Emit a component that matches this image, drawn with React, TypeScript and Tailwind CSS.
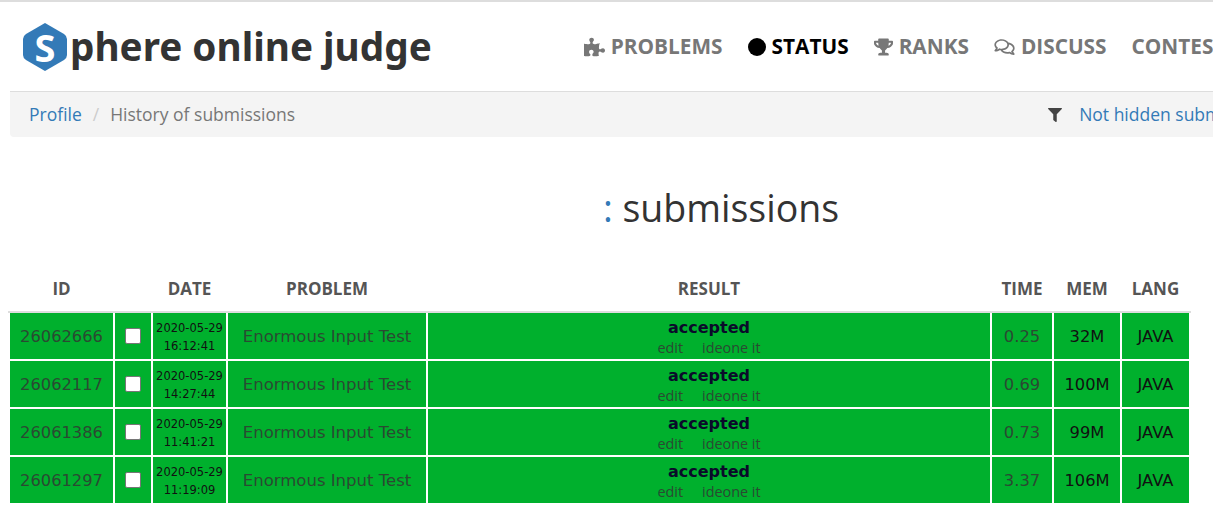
import { FaPuzzlePiece, FaTrophy, FaRegComments, FaFilter } from "react-icons/fa";

const ROWS = [
  { id: "26062666", date: "2020-05-29", clock: "16:12:41", time: "0.25", mem: "32M" },
  { id: "26062117", date: "2020-05-29", clock: "14:27:44", time: "0.69", mem: "100M" },
  { id: "26061386", date: "2020-05-29", clock: "11:41:21", time: "0.73", mem: "99M" },
  { id: "26061297", date: "2020-05-29", clock: "11:19:09", time: "3.37", mem: "106M" },
];

const HEADERS = [
  { label: "ID", w: "w-[105px]" },
  { label: "", w: "w-[38px]" },
  { label: "DATE", w: "w-[75px]" },
  { label: "PROBLEM", w: "w-[200px]" },
  { label: "RESULT", w: "w-[564px]" },
  { label: "TIME", w: "w-[62px]" },
  { label: "MEM", w: "w-[68px]" },
  { label: "LANG", w: "w-[69px]" },
];

const cell = "border-2 border-white bg-[#00b02d] p-0 text-center align-middle";

function Logo() {
  return (
    <div className="flex items-center">
      <div className="relative h-[48px] w-[44px] shrink-0">
        <svg viewBox="0 0 44 48" className="h-full w-full">
          <path
            d="M22 0 L41 11 Q44 13 44 16 L44 32 Q44 35 41 37 L22 48 L3 37 Q0 35 0 32 L0 16 Q0 13 3 11 Z"
            fill="#337ab7"
          />
        </svg>
        <span className="absolute inset-0 flex items-center justify-center font-['Noto_Sans'] text-[38px] leading-none font-bold text-white">
          S
        </span>
      </div>
      <span className="ml-[3px] font-['Noto_Sans'] text-[38.7px] leading-none font-bold whitespace-nowrap text-[#333]">
        phere online judge
      </span>
    </div>
  );
}

function NavItem({ icon, label, active }: { icon: React.ReactNode; label: string; active?: boolean }) {
  return (
    <a
      className={`flex shrink-0 items-center gap-[6px] whitespace-nowrap text-[20.8px] font-bold ${
        active ? "text-black" : "text-[#777]"
      }`}
    >
      {icon}
      {label}
    </a>
  );
}

export default function App() {
  return (
    <div className="h-[518px] w-[1213px] overflow-hidden border-t-2 border-[#ddd] bg-white font-['Open_Sans',sans-serif]">
      <header className="flex h-[89px] items-center pl-[23px]">
        <Logo />
        <nav className="ml-[152px] flex items-center gap-[25px]">
          <NavItem icon={<FaPuzzlePiece className="h-[20px] w-[21px]" />} label="PROBLEMS" />
          <NavItem icon={<span className="block h-[18px] w-[18px] rounded-full bg-black" />} label="STATUS" active />
          <NavItem icon={<FaTrophy className="h-[18px] w-[19px]" />} label="RANKS" />
          <NavItem icon={<FaRegComments className="h-[18px] w-[21px]" />} label="DISCUSS" />
          <NavItem icon={null} label="CONTESTS" />
        </nav>
      </header>

      <div className="ml-[10px] flex h-[46px] w-[1300px] items-center rounded-b-[4px] border-t border-[#ddd] bg-[#f4f4f4] pl-[19px] text-[17.5px] text-[#777]">
        <a className="text-[#337ab7]">Profile</a>
        <span className="px-[11px] text-[#ccc]">/</span>
        <span>History of submissions</span>
        <FaFilter className="ml-[753px] h-[14px] w-[14px] shrink-0 text-[#444]" />
        <a className="ml-[17px] whitespace-nowrap text-[#337ab7]">Not hidden submissions</a>
      </div>

      <h2 className="mt-[44px] pl-[229px] text-center text-[37.5px] leading-[54px] font-normal text-[#333]">
        <span className="text-[#337ab7]">:</span> submissions
      </h2>

      <table className="mt-[31px] ml-[8px] w-[1181px] table-fixed border-collapse">
        <thead>
          <tr className="h-[46px]">
            {HEADERS.map((h, i) => (
              <th key={i} className={`${h.w} border-b-2 border-[#ddd] p-0 text-center text-[17px] font-bold text-[#555]`}>
                {h.label}
              </th>
            ))}
          </tr>
        </thead>
        <tbody className="font-['DejaVu_Sans',sans-serif] text-[16.3px]">
          {ROWS.map((r) => (
            <tr key={r.id} className="h-[48px]">
              <td className={`${cell} pt-[2px] text-[#2a4a32]`}>{r.id}</td>
              <td className={cell}>
                <input type="checkbox" className="block mx-auto h-[16px] w-[16px] appearance-none rounded-[2px] border border-[#767676] bg-white" readOnly />
              </td>
              <td className={`${cell} pt-[1px] text-[11.5px] leading-[18px] text-[#111]`}>
                {r.date}
                <br />
                {r.clock}
              </td>
              <td className={`${cell} pt-[2px] text-[16.5px] text-[#2a4a32]`}>Enormous Input Test</td>
              <td className={`${cell} pt-[2px]`}>
                <div className="pt-[1px] text-[16px] leading-[20px] font-bold text-[#0a0a2a]">accepted</div>
                <div className="flex justify-center gap-[19px] font-['Open_Sans',sans-serif] text-[14.4px] leading-[20px] text-[#2a4a32]">
                  <a>edit</a>
                  <a>ideone it</a>
                </div>
              </td>
              <td className={`${cell} pt-[2px] text-[#2a4a32]`}>{r.time}</td>
              <td className={`${cell} pt-[2px] text-[#111]`}>{r.mem}</td>
              <td className={`${cell} pt-[2px] text-[#111]`}>JAVA</td>
            </tr>
          ))}
        </tbody>
      </table>
    </div>
  );
}
